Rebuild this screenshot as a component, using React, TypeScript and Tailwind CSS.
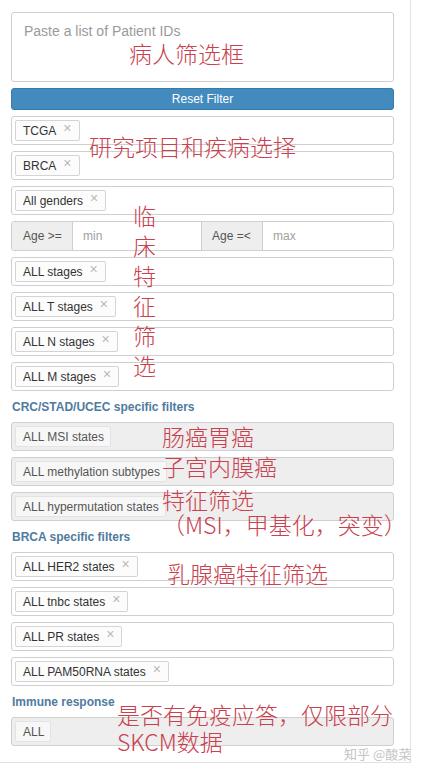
const sans = { fontFamily: '"Liberation Sans", Arial, sans-serif' };
const cjk = { fontFamily: '"Noto Sans CJK SC", "Liberation Serif", serif' };

function Tag({ label, disabled = false }: { label: string; disabled?: boolean }) {
  if (disabled) {
    return (
      <span className="inline-flex h-[21px] items-center rounded-[2px] border border-[#e3e3e3] bg-[#f7f7f7] pl-[7px] pr-[6px] text-[12px] text-[#555]">
        {label}
      </span>
    );
  }
  return (
    <span className="inline-flex h-[21px] items-center rounded-[2px] border border-[#d4d4d4] bg-[#fcfcfc] pl-[7px] pr-[7px] text-[12px] text-[#333]">
      {label}
      <span className="ml-[7px] -mt-[6px] text-[14px] leading-none text-[#b8b8b8]">×</span>
    </span>
  );
}

function Field({ label, disabled = false }: { label: string; disabled?: boolean }) {
  return (
    <div
      className={`flex h-[29px] w-[383px] items-center rounded-[3px] border border-[#cfcfcf] pl-[3px] ${
        disabled ? 'bg-[#eeeeee]' : 'bg-white'
      }`}
    >
      <Tag label={label} disabled={disabled} />
    </div>
  );
}

function Heading({ text }: { text: string }) {
  return (
    <div className="mt-[2px] h-[17px] pl-[1px] text-[12px] font-bold leading-[17px] text-[#4f7b9e]">{text}</div>
  );
}

// red annotations drawn over the form
function Note({ className, children }: { className: string; children: React.ReactNode }) {
  return (
    <div
      className={`absolute whitespace-nowrap text-[23px] font-light leading-none text-[#c9404e] ${className}`}
      style={cjk}
    >
      {children}
    </div>
  );
}

export default function App() {
  return (
    <div className="relative h-[774px] w-[425px] overflow-hidden bg-white" style={sans}>
      <div className="flex h-[763px] w-[411px] flex-col gap-[6px] border-b border-r border-[#e2e2e2] pl-[11px] pt-[12px]">
        <div className="h-[70px] w-[383px] rounded-[3px] border border-[#cfcfcf] bg-white px-[12px] pt-[8px] text-[14px] text-[#9a9a9a]">
          Paste a list of Patient IDs
        </div>
        <button className="flex h-[22px] w-[383px] items-center justify-center rounded-[3px] border border-[#3a7aa8] bg-[#438bbe] text-[12px] text-white">
          Reset Filter
        </button>

        <Field label="TCGA" />
        <Field label="BRCA" />
        <Field label="All genders" />

        <div className="flex h-[30px] w-[383px] overflow-hidden rounded-[3px] border border-[#cfcfcf] text-[12px]">
          <div className="flex w-[61px] items-center border-r border-[#cfcfcf] bg-[#eeeeee] pl-[11px] text-[#555]">Age &gt;=</div>
          <div className="flex w-[129px] items-center border-r border-[#cfcfcf] bg-white pl-[10px] text-[#a0a0a0]">min</div>
          <div className="flex w-[61px] items-center border-r border-[#cfcfcf] bg-[#eeeeee] pl-[10px] text-[#555]">Age =&lt;</div>
          <div className="flex flex-1 items-center bg-white pl-[10px] text-[#a0a0a0]">max</div>
        </div>

        <Field label="ALL stages" />
        <Field label="ALL T stages" />
        <Field label="ALL N stages" />
        <Field label="ALL M stages" />

        <Heading text="CRC/STAD/UCEC specific filters" />
        <Field label="ALL MSI states" disabled />
        <Field label="ALL methylation subtypes" disabled />
        <Field label="ALL hypermutation states" disabled />

        <Heading text="BRCA specific filters" />
        <Field label="ALL HER2 states" />
        <Field label="ALL tnbc states" />
        <Field label="ALL PR states" />
        <Field label="ALL PAM50RNA states" />

        <Heading text="Immune response" />
        <Field label="ALL" disabled />
      </div>

      <Note className="left-[129px] top-[42px]">病人筛选框</Note>
      <Note className="left-[89px] top-[135px]">研究项目和疾病选择</Note>
      <div
        className="absolute left-[133px] top-[200px] flex flex-col text-[23px] font-light leading-[30px] text-[#c9404e]"
        style={cjk}
      >
        {'临床特征筛选'.split('').map((c) => (
          <span key={c}>{c}</span>
        ))}
      </div>
      <Note className="left-[162px] top-[425px]">肠癌胃癌</Note>
      <Note className="left-[162px] top-[455px]">子宫内膜癌</Note>
      <Note className="left-[162px] top-[488px]">特征筛选</Note>
      <Note className="left-[162px] top-[513px]">（MSI，甲基化，突变）</Note>
      <Note className="left-[167px] top-[562px]">乳腺癌特征筛选</Note>
      <Note className="left-[117px] top-[703px]">是否有免疫应答，仅限部分</Note>
      <Note className="left-[117px] top-[730px]">SKCM数据</Note>

      <div className="absolute left-[344px] top-[744px] text-[13px] text-[#c4c4c4]" style={cjk}>
        知乎 @酸菜
      </div>
    </div>
  );
}
